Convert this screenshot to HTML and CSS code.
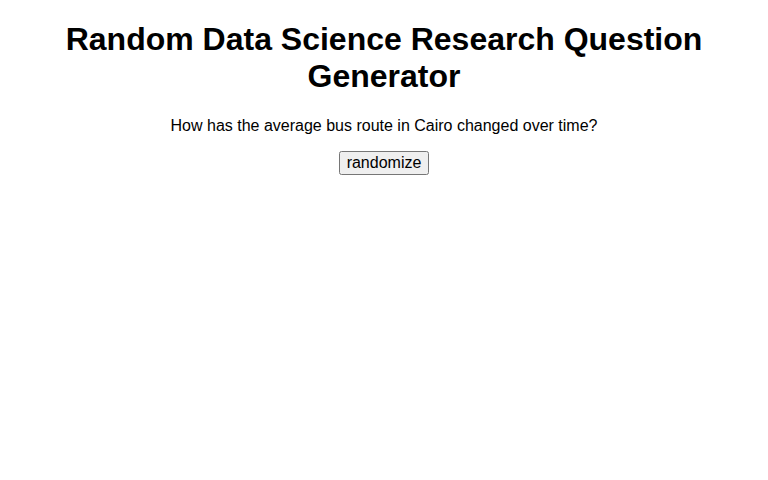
FILE: index.html
```html
<!DOCTYPE html>
<html lang="en">
<head>
    <meta charset="UTF-8">
    <meta name="viewport" content="width=device-width, initial-scale=1.0">
    <title>Random Data Science Research Question Generator</title>
    <link rel="stylesheet" href="styles.css">
</head>
<body>

    <div class="container">
        <h1>Random Data Science Research Question Generator</h1>

        <p class="question" id="question">How has the average bus route in Cairo changed over time?</p>

        <button class="randomize" id="randomize">randomize</button>
    </div>

</body>
</html>
```

FILE: styles.css
```css
body {
    font-family: 'Liberation Sans', Arial, sans-serif;
    margin: 0;
    color: #000;
    background: #fff;
}

.container {
    text-align: center;
    padding: 0 8px;
}

h1 {
    font-size: 32px;
    margin: 21px 0 22px;
}

.question {
    font-size: 16px;
    margin: 16px 0;
}

.randomize {
    font-family: 'Liberation Sans', Arial, sans-serif;
    font-size: 16px;
    padding: 1px 6px;
}
```
